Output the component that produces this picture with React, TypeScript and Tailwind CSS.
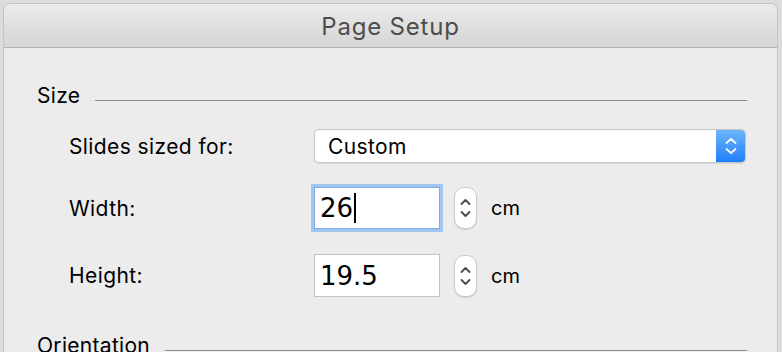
import React from "react";

const font = { fontFamily: "Inter, 'Liberation Sans', sans-serif" };

function Stepper() {
  return (
    <div className="w-[23px] h-[42px] rounded-[10px] border border-[#c9c9c9] bg-white shadow-[0_1px_1px_rgba(0,0,0,0.12)] flex flex-col items-center justify-center gap-[6px]">
      <svg width="11" height="7" viewBox="0 0 11 7" fill="none">
        <path d="M1.5 6 L5.5 2 L9.5 6" stroke="#4a4a4a" strokeWidth="1.8" strokeLinecap="round" strokeLinejoin="round" />
      </svg>
      <svg width="11" height="7" viewBox="0 0 11 7" fill="none">
        <path d="M1.5 1 L5.5 5 L9.5 1" stroke="#4a4a4a" strokeWidth="1.8" strokeLinecap="round" strokeLinejoin="round" />
      </svg>
    </div>
  );
}

function SectionHeader({ label }: { label: string }) {
  return (
    <div className="flex items-center h-[26px] pl-[33px] pr-[30px]">
      <span className="text-[21px] tracking-[0.3px] text-black leading-none">{label}</span>
      <div className="flex-1 h-px bg-[#8c8c8c] ml-[15px] mt-[10px]" />
    </div>
  );
}

export default function App() {
  return (
    <div className="w-[782px] h-[352px] bg-[#dcdcdc] overflow-hidden pt-[3px] pl-[3px]" style={font}>
      <div className="w-[775px] h-[349px] rounded-t-[7px] border-x border-t border-[#c4c4c4] bg-[#ececec] overflow-hidden flex flex-col">
        <div className="h-[44px] shrink-0 bg-gradient-to-b from-[#ebebeb] to-[#d5d5d5] border-b border-[#b3b3b3] flex items-center justify-center">
          <span className="text-[24px] tracking-[0.8px] text-[#4d4d4d] leading-none mt-[2px]">Page Setup</span>
        </div>
        <div className="flex flex-col">
          <div className="mt-[34px]">
            <SectionHeader label="Size" />
          </div>
          <div className="mt-[21px] flex items-center h-[34px] pl-[65px]">
            <span className="w-[245px] text-[21px] tracking-[0.4px] text-black leading-none">Slides sized for:</span>
            <div className="w-[432px] h-[34px] rounded-[5px] border border-[#c6c6c6] bg-white shadow-[0_1px_1px_rgba(0,0,0,0.1)] flex overflow-hidden">
              <div className="flex-1 flex items-center pl-[13px] text-[21px] tracking-[0.4px] text-black leading-none">Custom</div>
              <div className="w-[29px] h-full bg-gradient-to-b from-[#6db4fb] to-[#1b7ffa] flex flex-col items-center justify-center gap-[4px]">
                <svg width="12" height="7" viewBox="0 0 12 7" fill="none">
                  <path d="M1.5 6 L6 1.8 L10.5 6" stroke="white" strokeWidth="1.8" strokeLinecap="round" strokeLinejoin="round" />
                </svg>
                <svg width="12" height="7" viewBox="0 0 12 7" fill="none">
                  <path d="M1.5 1 L6 5.2 L10.5 1" stroke="white" strokeWidth="1.8" strokeLinecap="round" strokeLinejoin="round" />
                </svg>
              </div>
            </div>
          </div>
          <div className="mt-[24px] flex items-center h-[42px] pl-[65px]">
            <span className="w-[245px] text-[21px] tracking-[0.4px] text-black leading-none">Width:</span>
            <div className="w-[126px] h-[42px] bg-white border border-[#7fa9e6] ring-[3px] ring-[#a3c6f1] flex items-center pl-[5px]">
              <span className="text-[26px] text-black leading-none" style={{ fontFamily: "'DejaVu Sans', sans-serif" }}>26</span>
              <span className="w-[2px] h-[30px] bg-black ml-[1px]" />
            </div>
            <div className="ml-[14px]"><Stepper /></div>
            <span className="ml-[14px] text-[20px] text-black leading-none">cm</span>
          </div>
          <div className="mt-[25px] flex items-center h-[43px] pl-[65px]">
            <span className="w-[245px] text-[21px] tracking-[0.4px] text-black leading-none">Height:</span>
            <div className="w-[126px] h-[43px] bg-white border border-[#c2c2c2] flex items-center pl-[5px]">
              <span className="text-[26px] text-black leading-none" style={{ fontFamily: "'DejaVu Sans', sans-serif" }}>19.5</span>
            </div>
            <div className="ml-[14px]"><Stepper /></div>
            <span className="ml-[14px] text-[20px] text-black leading-none">cm</span>
          </div>
          <div className="mt-[35px]">
            <SectionHeader label="Orientation" />
          </div>
        </div>
      </div>
    </div>
  );
}
